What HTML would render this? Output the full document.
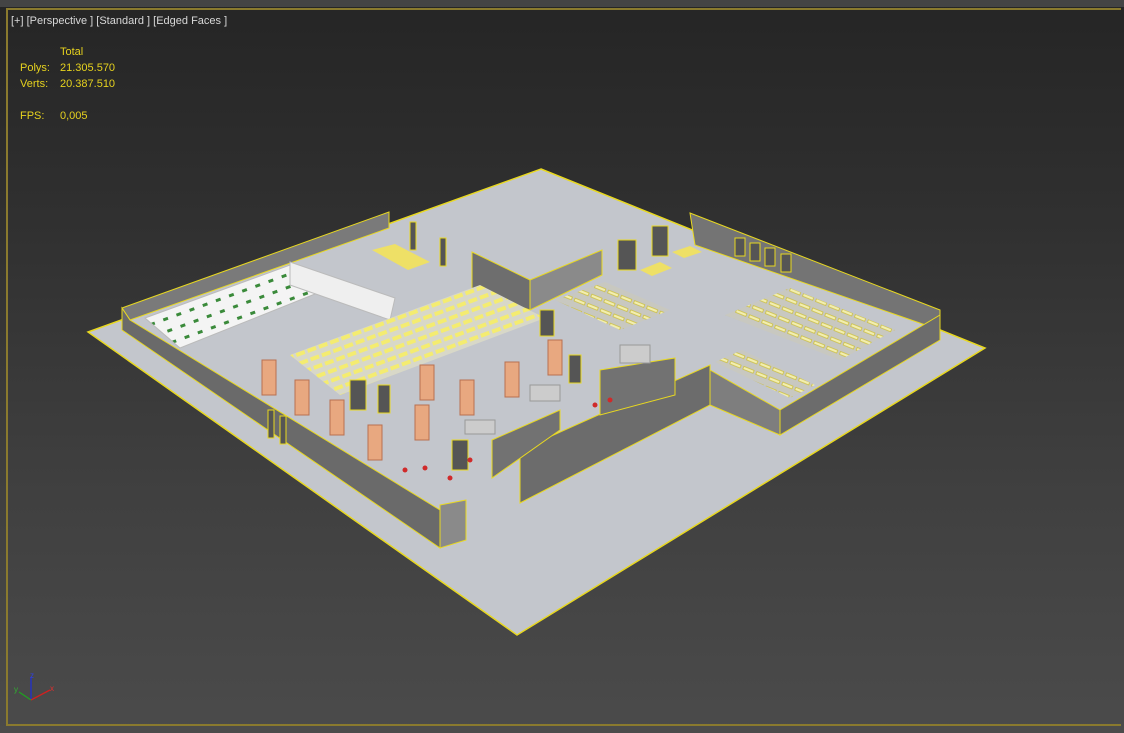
<!DOCTYPE html>
<html><head><style>
html,body{margin:0;padding:0;width:1124px;height:733px;overflow:hidden;background:#2a2a2a}
.vp{position:absolute;left:0;top:0;width:1124px;height:733px;background:linear-gradient(#252525 0%,#303030 30%,#3f3f3f 65%,#4b4b4b 100%)}
.top{position:absolute;left:0;top:0;width:1124px;height:7px;background:#444}
.brd{position:absolute;left:6px;top:8px;width:1115px;height:718px;border:2px solid #8a7a2e;box-sizing:border-box;border-right:none}
.t{position:absolute;font-family:"Liberation Sans",sans-serif;font-size:11px;color:#d8d8d8}
.y{color:#e6d21e}
</style></head><body>
<div class="vp"></div>
<div class="top"></div>
<div class="brd"></div>
<div class="t" style="left:11px;top:15px">[+] [Perspective ] [Standard ] [Edged Faces ]</div>
<div class="t y" style="left:60px;top:46px">Total</div>
<div class="t y" style="left:20px;top:62px">Polys:</div>
<div class="t y" style="left:60px;top:62px">21.305.570</div>
<div class="t y" style="left:20px;top:78px">Verts:</div>
<div class="t y" style="left:60px;top:78px">20.387.510</div>
<div class="t y" style="left:20px;top:110px">FPS:</div>
<div class="t y" style="left:60px;top:110px">0,005</div>
<svg style="position:absolute;left:0;top:0" width="1124" height="733">
<defs>
<pattern id="yd" width="12" height="9" patternUnits="userSpaceOnUse" patternTransform="rotate(-20)">
<rect width="12" height="9" fill="#d8d8c8"/><rect x="1" y="1" width="9" height="4" fill="#f4ec70"/></pattern>
<pattern id="rd" width="14" height="10" patternUnits="userSpaceOnUse" patternTransform="rotate(22)">
<rect width="14" height="10" fill="#c8c8c0"/><rect x="1" y="1" width="11" height="3" fill="#f2eeb0" stroke="#c8b820" stroke-width=".6"/></pattern>
<pattern id="wd" width="14" height="12" patternUnits="userSpaceOnUse" patternTransform="rotate(-20)">
<rect width="14" height="12" fill="#f4f4f4"/><rect x="2" y="7" width="5" height="3" fill="#3a8a3a"/></pattern>
</defs>
<g stroke-width="1.3">
<line x1="31" y1="700" x2="31" y2="677" stroke="#2030d0"/>
<line x1="31" y1="700" x2="50" y2="690" stroke="#d02020"/>
<line x1="31" y1="700" x2="19" y2="692" stroke="#20a020"/>
</g>
<text x="30" y="678" font-size="8" fill="#3040e0" font-family="Liberation Sans">z</text>
<text x="50" y="691" font-size="8" fill="#e03030" font-family="Liberation Sans">x</text>
<text x="14" y="692" font-size="8" fill="#30b030" font-family="Liberation Sans">y</text>
<polygon points="541,169 985,348 517,635 88,332" fill="#c3c6cc" stroke="#e8d820" stroke-width="1.5"/>
<polygon points="122,308 389,212 389,228 130,320" fill="#7a7a7a" stroke="#e8d820"/>
<polygon points="122,308 130,320 440,510 440,548 122,330" fill="#6a6a6a" stroke="#e8d820"/>
<polygon points="440,505 466,500 466,540 440,548" fill="#8a8a8a" stroke="#e8d820"/>
<polygon points="472,252 530,280 530,310 472,290" fill="#6e6e6e" stroke="#e8d820"/>
<polygon points="530,280 602,250 602,275 530,310" fill="#8a8a8a" stroke="#e8d820"/>
<polygon points="690,213 940,310 940,330 695,245" fill="#747474" stroke="#e8d820"/>
<polygon points="780,410 940,315 940,340 780,435" fill="#6c6c6c" stroke="#e8d820"/>
<polygon points="710,370 780,410 780,435 710,405" fill="#7e7e7e" stroke="#e8d820"/>
<polygon points="520,450 710,365 710,405 520,503" fill="#6c6c6c" stroke="#e8d820"/>
<polygon points="492,440 560,410 560,430 492,478" fill="#727272" stroke="#e8d820"/>
<polygon points="600,370 675,358 675,395 600,415" fill="#727272" stroke="#e8d820"/>
<g fill="#555" stroke="#e8d820"><rect x="618" y="240" width="18" height="30"/><rect x="652" y="226" width="16" height="30"/><rect x="735" y="238" width="10" height="18"/><rect x="750" y="243" width="10" height="18"/><rect x="765" y="248" width="10" height="18"/><rect x="781" y="254" width="10" height="18"/><rect x="410" y="222" width="6" height="28"/><rect x="440" y="238" width="6" height="28"/></g>
<g fill="#eee066"><polygon points="372,250 395,244 430,262 408,270"/><polygon points="640,270 660,262 672,268 652,276"/><polygon points="672,252 690,246 702,252 684,258"/></g>
<polygon points="145,318 290,265 330,288 180,348" fill="url(#wd)" stroke="#bbb"/>
<polygon points="290,262 395,298 390,320 290,285" fill="#efefef" stroke="#bbb"/>
<polygon points="290,355 480,285 545,318 340,395" fill="url(#yd)"/>
<polygon points="725,315 790,288 895,330 840,360" fill="url(#rd)"/>
<polygon points="715,362 742,350 815,385 790,398" fill="url(#rd)"/>
<polygon points="555,300 605,282 670,310 620,330" fill="url(#rd)"/>
<g fill="#e8a880" stroke="#b87050"><rect x="262" y="360" width="14" height="35"/><rect x="295" y="380" width="14" height="35"/><rect x="330" y="400" width="14" height="35"/><rect x="368" y="425" width="14" height="35"/><rect x="420" y="365" width="14" height="35"/><rect x="460" y="380" width="14" height="35"/><rect x="505" y="362" width="14" height="35"/><rect x="415" y="405" width="14" height="35"/><rect x="548" y="340" width="14" height="35"/></g>
<g fill="#555" stroke="#e8d820"><rect x="350" y="380" width="16" height="30"/><rect x="378" y="385" width="12" height="28"/><rect x="452" y="440" width="16" height="30"/><rect x="540" y="310" width="14" height="26"/><rect x="569" y="355" width="12" height="28"/><rect x="268" y="410" width="6" height="28"/><rect x="280" y="416" width="6" height="28"/></g>
<g fill="#ccc" stroke="#999"><rect x="530" y="385" width="30" height="16"/><rect x="465" y="420" width="30" height="14"/><rect x="620" y="345" width="30" height="18"/></g>
<g fill="#d02a2a"><circle cx="405" cy="470" r="2.5"/><circle cx="425" cy="468" r="2.5"/><circle cx="450" cy="478" r="2.5"/><circle cx="470" cy="460" r="2.5"/><circle cx="595" cy="405" r="2.5"/><circle cx="610" cy="400" r="2.5"/></g>
</svg>
</body></html>
